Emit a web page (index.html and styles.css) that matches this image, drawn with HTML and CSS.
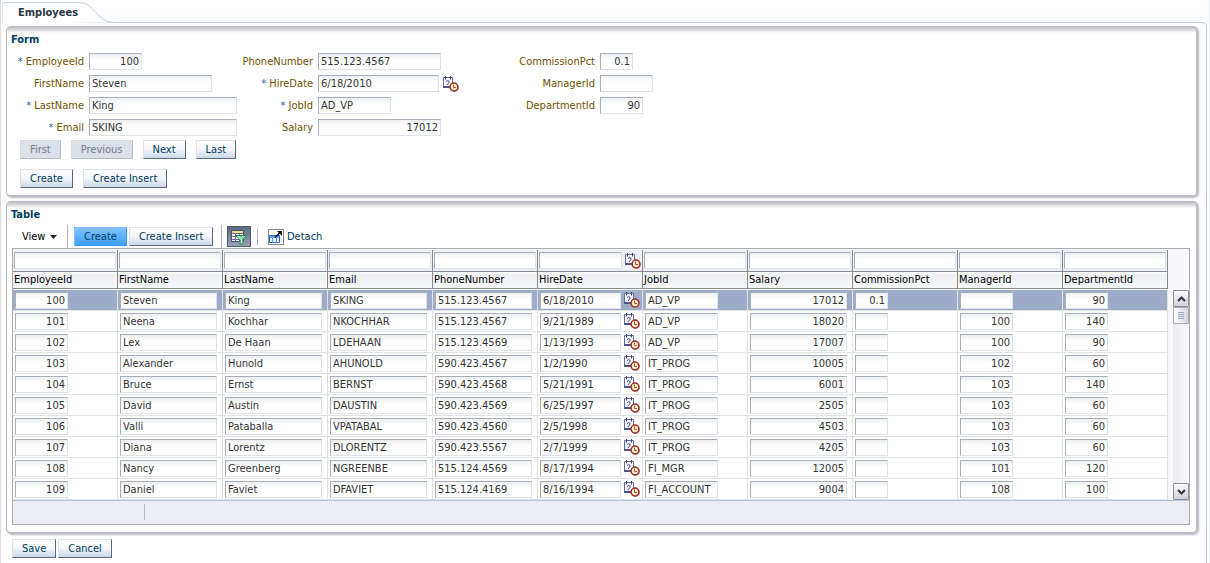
FILE: index.html
```html
<!DOCTYPE html>
<html lang="en">
<head>
<meta charset="utf-8">
<title>Employees</title>
<link rel="stylesheet" href="styles.css">
</head>
<body>
<svg class="sprite" width="0" height="0" aria-hidden="true">
  <symbol id="date" viewBox="0 0 16 16">
    <path d="M.5 1.500h9v10h-9z" fill="#f0f2fc" stroke="#676c9b"/>
    <path d="M0 11h7" stroke="#4e5388" stroke-width="2"/>
    <path d="M2.500 0v3.500M7.500 0v3.500" stroke="#3f4575"/>
    <path d="M3 5.500q1.500-1.500 3-.3 .8 1.300-1 2.300l-1 1.500" fill="none" stroke="#454b6b"/>
    <circle cx="11.700" cy="11.700" r="4.300" fill="#b9b2ad"/>
    <circle cx="11" cy="11" r="3.900" fill="#fff0c8" stroke="#a12a26" stroke-width="1.500"/>
    <path d="M10.500 8.500v3h2.500" fill="none" stroke="#b5533c"/>
  </symbol>
</svg>
<header class="tabs">
  <svg class="tab-shape" width="112" height="22" viewBox="0 0 112 22" aria-hidden="true">
    <path d="M0 21.500V1.500Q1 .5 4 .5H77C93 .5 94 20.500 112 20.500" fill="#fff" stroke="#c4d0e0"/>
  </svg>
  <h1 class="tab-title">Employees</h1>
</header>
<main class="page">
  <section class="panel">
    <h2 class="panel-title">Form</h2>
    <form class="fields">
      <div class="col col-a">
        <label for="eid"><span class="req">*</span> EmployeeId</label><input id="eid" class="box w53 num" value="100">
        <label for="first">FirstName</label><input id="first" class="box w123" value="Steven">
        <label for="last"><span class="req">*</span> LastName</label><input id="last" class="box w148" value="King">
        <label for="email"><span class="req">*</span> Email</label><input id="email" class="box w148" value="SKING">
      </div>
      <div class="col col-b">
        <label for="phone">PhoneNumber</label><input id="phone" class="box w123" value="515.123.4567">
        <label for="hire"><span class="req">*</span> HireDate</label>
        <div class="date-field"><input id="hire" class="box w121" value="6/18/2010"><button type="button" class="date-btn" aria-label="Select date"><svg width="16" height="16"><use href="#date"/></svg></button></div>
        <label for="job"><span class="req">*</span> JobId</label><input id="job" class="box w73" value="AD_VP">
        <label for="salary">Salary</label><input id="salary" class="box w123 num" value="17012">
      </div>
      <div class="col col-c">
        <label for="comm">CommissionPct</label><input id="comm" class="box w33 num" value="0.1">
        <label for="mgr">ManagerId</label><input id="mgr" class="box w53 num">
        <label for="dept">DepartmentId</label><input id="dept" class="box w43 num" value="90">
      </div>
    </form>
    <div class="actions">
      <button class="btn" disabled>First</button>
      <button class="btn" disabled>Previous</button>
      <button class="btn">Next</button>
      <button class="btn">Last</button>
    </div>
    <div class="actions">
      <button class="btn">Create</button>
      <button class="btn">Create Insert</button>
    </div>
  </section>

  <section class="panel table-panel">
    <h2 class="panel-title">Table</h2>
    <div class="toolbar">
      <button class="menu-btn">View <svg width="7" height="4" viewBox="0 0 7 4" aria-hidden="true"><path d="M0 0h7L3.500 4z" fill="#222"/></svg></button>
      <div class="group"><button class="btn active">Create</button><button class="btn">Create Insert</button></div>
      <button class="filter-btn" aria-label="Query by example">
        <svg width="16" height="16" viewBox="0 0 16 16" aria-hidden="true">
          <path d="M.5 1.500h12v11H.5z" fill="#fff" stroke="#454d79"/>
          <path d="M1 2h11v2H1z" fill="#f4e27c"/>
          <path d="M1 4.500h11M1 7.500h11M1 10.500h11M4.500 4v8M8.500 4v8" stroke="#6a719c"/>
          <path d="M4.500 6.500h11L12 10.500v4l-3 1.500v-5.500z" fill="#8ed8a7" stroke="#2e8a5a"/>
          <path d="M7 7.500l3.500 3.500v3" fill="none" stroke="#e2fae8"/>
        </svg>
      </button>
      <span class="short-rule"></span>
      <button class="detach-btn">
        <svg width="16" height="16" viewBox="0 0 16 16" aria-hidden="true">
          <path d="M.5.500h15v15H.5z" fill="#fff" stroke="#111" stroke-dasharray="1 1"/>
          <path d="M1.500 6.500h10v7h-10z" fill="#e8f1ff" stroke="#2860c8"/>
          <path d="M2 7h9v2H2z" fill="#6ea0ed"/>
          <path d="M4.500 9v5M8.500 9v5" stroke="#5e8fe5"/>
          <path d="M7 8.500l5-5" stroke="#111" stroke-width="1.500"/>
          <path d="M9 2h5v5z" fill="#111"/>
        </svg>Detach
      </button>
    </div>
    <div class="grid-frame">
      <div class="grid-body">
        <table class="grid">
          <thead><tr class="filters" id="filters"></tr><tr class="heads" id="heads"></tr></thead>
          <tbody id="rows"></tbody>
        </table>
        <div class="scroll">
          <button class="scroll-btn" aria-label="Scroll up"><svg width="9" height="6" viewBox="0 0 9 6"><path d="M1 5l3.500-3.500L8 5" fill="none" stroke="#333" stroke-width="2"/></svg></button>
          <div class="thumb"><svg width="6" height="7" viewBox="0 0 6 7"><path d="M0 .5h6M0 2.500h6M0 4.500h6M0 6.500h6" stroke="#9aa5c4"/></svg></div>
          <div class="track"></div>
          <button class="scroll-btn" aria-label="Scroll down"><svg width="9" height="6" viewBox="0 0 9 6"><path d="M1 1l3.500 3.500L8 1" fill="none" stroke="#333" stroke-width="2"/></svg></button>
        </div>
      </div>
      <div class="grid-foot"><span class="foot-rule"></span></div>
    </div>
  </section>
  <footer class="page-actions"><button class="btn">Save</button><button class="btn">Cancel</button></footer>
</main>
<script src="app.js"></script>
</body>
</html>
```
FILE: styles.css
```css
* { box-sizing: border-box; }
body {
  margin: 0;
  padding: 2px 2px 0 2px;
  min-height: 100vh;
  display: flex;
  flex-direction: column;
  background: linear-gradient(#fff, #fafbfe 22px, #fff 23px);
  border-left: 1px solid #dcdcdc;
  border-right: 1px solid #e4ebf5;
  color: #333;
}
body, button, input { font: 11px/13px "DejaVu Sans Condensed", "Noto Sans", sans-serif; }
button { margin: 0; padding: 0; border: 0; background: none; }
svg { display: block; }
.sprite { position: absolute; }

.tabs { display: grid; height: 20px; margin-left: -1px; }
.tab-shape { grid-area: 1 / 1; z-index: 1; }
.tab-title { grid-area: 1 / 1; z-index: 2; margin: 4px 0 0 16px; font-size: 11px; line-height: 13px; color: #2b3540; }

.page {
  flex: 1;
  padding: 3px 8px 0 3px;
  background: #fff;
  border-top: 1px solid #c4d0e0;
  border-right: 1px solid #c4d0e0;
  border-top-right-radius: 5px;
}
.panel {
  margin-bottom: 4px;
  padding: 6px 6px 7px 4px;
  border: 1px solid #b8bccb;
  border-width: 1px 2px 2px 1px;
  border-radius: 5px;
  background: linear-gradient(#bcbcc0, #fff 6px);
  box-shadow: 1px 1px 2px #bbb;
}
.panel-title { margin: 0; font-size: 11px; line-height: 13px; color: #003d5b; }

.fields { display: flex; margin-top: 7px; }
.col { display: grid; grid-auto-rows: 17px; row-gap: 5px; column-gap: 5px; align-items: center; align-content: start; }
.col-a { grid-template-columns: 73px 148px; }
.col-b { grid-template-columns: 76px 142px; }
.col-c { grid-template-columns: 76px 60px; margin-left: 59px; }
.col label { text-align: right; white-space: nowrap; color: #6e5200; display: flex; justify-content: flex-end; gap: 3px; }
.req { color: #2c6599; }
.box {
  width: 100%;
  height: 17px;
  padding: 0 2px;
  border: 1px solid;
  border-color: #a8afba #dfe2e6 #dfe2e6 #a8afba;
  border-radius: 0;
  outline: 0;
  background: linear-gradient(#eceff0, #fff 6px);
  color: #333;
}
.num { text-align: right; }
.w33 { width: 33px; }
.w43 { width: 43px; }
.w53 { width: 53px; }
.w73 { width: 73px; }
.w121 { width: 121px; }
.w123 { width: 123px; }
.w148 { width: 148px; }
.date-field { display: flex; align-items: center; gap: 4px; }
.date-btn { flex: none; width: 16px; height: 16px; }

.actions { display: flex; gap: 10px; margin: 4px 0 10px 9px; }
.actions + .actions { margin-bottom: 0; }
.btn {
  height: 19px;
  padding: 0 9px;
  border: 1px solid;
  border-color: #dfe3e8 #5d6778 #5d6778 #dfe3e8;
  background: linear-gradient(#fff, #f3f6fb 50%, #ccd7e9);
  color: #003d5b;
  white-space: nowrap;
}
.btn:disabled { background: #dce0e9; border-color: #d4dbe3 #b4bcc8 #b4bcc8 #d4dbe3; color: #737d8c; }
.btn.active { background: linear-gradient(#82c4ff, #3d9eff); border-color: #7dc0ff #3898f8 #3898f8 #7dc0ff; }

.table-panel { margin-bottom: 5px; }
.toolbar { display: flex; align-items: center; height: 23px; margin-top: 4px; }
.menu-btn { display: flex; align-items: center; gap: 5px; width: 57px; height: 23px; padding-left: 11px; border-right: 1px solid #a9b3c4; color: #000; }
.group { display: flex; align-items: center; gap: 2px; width: 154px; height: 23px; padding-left: 6px; border-right: 1px solid #a9b3c4; }
.filter-btn { display: grid; place-items: center; width: 24px; height: 21px; margin-left: 5px; border: 1px solid #4d5a70; background: linear-gradient(#5d6a80, #98a3b5); }
.short-rule { width: 1px; height: 16px; margin: 0 10px 0 6px; background: #a9b3c4; }
.detach-btn { display: flex; align-items: center; gap: 3px; color: #003d5b; }

.grid-frame { border: 1px solid #a9abb0; margin-left: 1px; }
.grid-body { display: flex; padding-top: 1px; background: #f8f8fb; }
.grid { flex: 1; width: 0; table-layout: fixed; border-spacing: 0; }
.grid th, .grid td { padding: 0 2px; text-align: left; vertical-align: middle; font-weight: normal; }
.filters th { height: 22px; border-right: 1px solid #868a92; border-bottom: 1px solid #868a92; background: #eef0f5; }
.grid .filters th { padding: 0 1px; }
.heads th { height: 17px; border: 1px solid #868a92; border-width: 0 1px 1px 0; background: linear-gradient(#fff, #eeeff2 3px, #f7f8fa); color: #000; line-height: 14px; }
.grid .heads th { padding: 0 0 0 1px; }
.grid td { height: 21px; border-right: 1px solid #e2e2e2; border-bottom: 1px solid #e2e2e2; background: #fff; }
.grid .selected td { height: 22px; border-top: 1px solid #fff; background: #9eacc9; }
.grid .box { display: block; }
.grid td .wide { width: 97px; }
.grid .date-field { gap: 3px; }
.grid .date-field .box { flex: 1; width: 0; }

.scroll { display: flex; flex-direction: column; width: 16px; margin: 40px 0 0 5px; }
.scroll-btn, .thumb { display: grid; place-items: center; height: 17px; border: 1px solid #8e8e98; border-radius: 1px; background: linear-gradient(#fcfcfe, #cfcfdc); }
.thumb { border-color: #a6a6b4; background: linear-gradient(90deg, #fff, #d5d5e2); }
.track { flex: 1; background: linear-gradient(90deg, #eaebf0, #f8f8fb); }
.grid-foot { display: flex; height: 24px; padding: 3px 0 4px 131px; border-top: 1px solid #b3c3dc; background: #ededf4; }
.foot-rule { width: 1px; background: #a9b7d2; }
.page-actions { display: flex; gap: 2px; padding: 0 6px; }
```
FILE: app.js
```javascript
const columns = [
  { name: "EmployeeId", size: "w53", num: true },
  { name: "FirstName", size: "wide" },
  { name: "LastName", size: "wide" },
  { name: "Email", size: "wide" },
  { name: "PhoneNumber", size: "wide" },
  { name: "HireDate", date: true },
  { name: "JobId", size: "w73" },
  { name: "Salary", size: "wide", num: true },
  { name: "CommissionPct", size: "w33", num: true },
  { name: "ManagerId", size: "w53", num: true },
  { name: "DepartmentId", size: "w43", num: true }
];
const employees = [
  "100|Steven|King|SKING|515.123.4567|6/18/2010|AD_VP|17012|0.1||90",
  "101|Neena|Kochhar|NKOCHHAR|515.123.4567|9/21/1989|AD_VP|18020||100|140",
  "102|Lex|De Haan|LDEHAAN|515.123.4569|1/13/1993|AD_VP|17007||100|90",
  "103|Alexander|Hunold|AHUNOLD|590.423.4567|1/2/1990|IT_PROG|10005||102|60",
  "104|Bruce|Ernst|BERNST|590.423.4568|5/21/1991|IT_PROG|6001||103|140",
  "105|David|Austin|DAUSTIN|590.423.4569|6/25/1997|IT_PROG|2505||103|60",
  "106|Valli|Pataballa|VPATABAL|590.423.4560|2/5/1998|IT_PROG|4503||103|60",
  "107|Diana|Lorentz|DLORENTZ|590.423.5567|2/7/1999|IT_PROG|4205||103|60",
  "108|Nancy|Greenberg|NGREENBE|515.124.4569|8/17/1994|FI_MGR|12005||101|120",
  "109|Daniel|Faviet|DFAVIET|515.124.4169|8/16/1994|FI_ACCOUNT|9004||108|100"
].map(line => line.split("|"));

const field = (label, value, css) => `<input class="box ${css}" aria-label="${label}" value="${value}">`;
const dateField = input => `<div class="date-field">${input}<button class="date-btn" aria-label="Select date"><svg width="16" height="16"><use href="#date"/></svg></button></div>`;

document.getElementById("filters").innerHTML = columns.map(c => {
  const input = field("Filter " + c.name, "", "");
  return `<th>${c.date ? dateField(input) : input}</th>`;
}).join("");
document.getElementById("heads").innerHTML = columns.map(c => `<th scope="col">${c.name}</th>`).join("");
document.getElementById("rows").innerHTML = employees.map((row, i) =>
  `<tr${i ? "" : ' class="selected"'}>` + columns.map((c, j) => {
    const input = field(c.name, row[j], (c.size || "") + (c.num ? " num" : ""));
    return `<td>${c.date ? dateField(input) : input}</td>`;
  }).join("") + "</tr>").join("");
```
